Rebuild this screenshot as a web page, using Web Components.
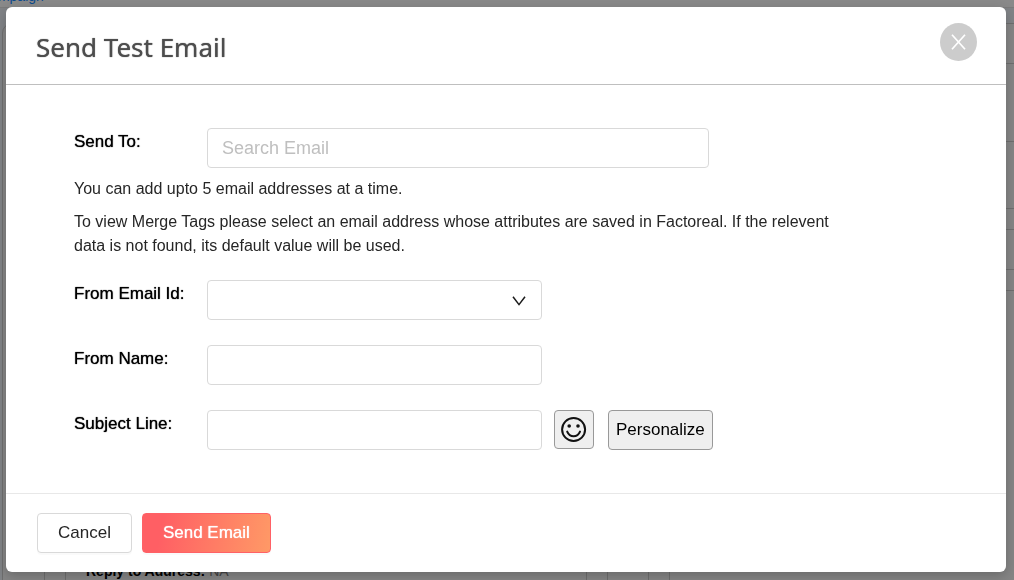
<!DOCTYPE html>
<html lang="en">
<head>
<meta charset="utf-8">
<meta name="viewport" content="width=device-width, initial-scale=1">
<title>Send Test Email</title>
<style>
    :root {
        --line: #d9d9d9;
        --text: #262626;
        --field-radius: 4px;
    }
    html, body {
        height: 100%;
    }
    body {
        margin: 0;
        overflow: hidden;
        font-family: "Liberation Sans", Arial, sans-serif;
        font-size: 17px;
        color: var(--text);
    }
</style>
</head>
<body>
<campaign-page></campaign-page>
<modal-dialog heading="Send Test Email">
    <form-row label="Send To:" type="text" placeholder="Search Email" wide></form-row>
    <form-hint>
        <p>You can add upto 5 email addresses at a time.</p>
        <p>To view Merge Tags please select an email address whose attributes are saved in Factoreal. If the relevent data is not found, its default value will be used.</p>
    </form-hint>
    <form-row label="From Email Id:" type="select"></form-row>
    <form-row label="From Name:" type="text"></form-row>
    <form-row label="Subject Line:" type="text">
        <emoji-button></emoji-button>
        <app-button variant="tool">Personalize</app-button>
    </form-row>
    <app-button slot="footer">Cancel</app-button>
    <app-button slot="footer" variant="primary">Send Email</app-button>
</modal-dialog>

<script>
/**
 * Campaign page that stays behind the dialog
 */
class CampaignPage extends HTMLElement {
    constructor() {
        super();
        this.attachShadow({ mode: "open" });
    }

    connectedCallback() {
        this.shadowRoot.innerHTML = `
        <style>
            :host {
                --edge: #6e6e6e;
                display: flex;
                flex-direction: column;
                height: 100vh;
                overflow: hidden;
                background: #808386;
                font-size: 14px;
                line-height: 20px;
            }
            * {
                box-sizing: border-box;
            }
            header {
                display: flex;
                align-items: flex-end;
                height: 8px;
                border-bottom: 1px solid #7b7b7b;
                background: #898989;
            }
            header a {
                margin: 0 0 1px -20px;
                color: #0d4a8c;
                text-decoration: none;
            }
            .panel {
                flex: 1;
                display: grid;
                grid-template-columns: 565fr 387fr;
                gap: 40px;
                margin: 15px -21px -20px 2px;
                padding-left: 41px;
                border: 1px solid var(--edge);
                border-radius: 10px 0 0 0;
                background: #858585;
            }
            .card {
                padding: 20px 20px 0;
                border: 1px solid var(--edge);
                border-width: 0 1px;
            }
            .inner {
                display: flex;
                align-items: flex-end;
                height: 100%;
                padding: 0 0 18px 20px;
                border: 1px solid var(--edge);
                border-width: 0 1px;
                color: #444;
            }
            .inner b {
                color: #000;
            }
            .side {
                display: flex;
                flex-direction: column;
            }
            .side div {
                border: 1px solid var(--edge);
                border-top: 0;
            }
            .side .head {
                height: 40px;
            }
            .side .stats {
                height: 78px;
            }
            .side .note {
                height: 67px;
            }
            .side .title {
                height: 41px;
                margin-top: 20px;
                border-top: 1px solid var(--edge);
            }
            .side .list {
                flex: 1;
                padding: 20px 0 0 20px;
            }
            .side .list div {
                height: 100%;
                border-top: 1px solid var(--edge);
            }
        </style>
        <header><a href="#">Campaign</a></header>
        <div class="panel">
            <div class="card">
                <div class="inner"><span><b>Reply to Address:</b> NA</span></div>
            </div>
            <div class="side">
                <div class="head"></div>
                <div class="stats"></div>
                <div class="note"></div>
                <div class="title"></div>
                <div class="list"><div></div></div>
            </div>
        </div>`;
    }
}

/**
 * Dialog with a heading, a body slot and a footer slot
 */
class ModalDialog extends HTMLElement {
    constructor() {
        super();
        this.attachShadow({ mode: "open" });
    }

    connectedCallback() {
        this.shadowRoot.innerHTML = `
        <style>
            :host {
                position: fixed;
                inset: 0;
                box-sizing: border-box;
                padding: 7px 8px 8px 6px;
                overflow: hidden;
            }
            section {
                display: flex;
                flex-direction: column;
                border-radius: 6px;
                background: #fff;
                box-shadow: 0 4px 12px rgba(0, 0, 0, 0.2);
            }
            header {
                display: flex;
                align-items: flex-start;
                justify-content: space-between;
                padding: 16px 29px 15px 30px;
                border-bottom: 1px solid #bfbfbf;
            }
            h2 {
                margin: 0;
                padding-top: 2px;
                font: 400 26px/44px "Noto Sans", "Segoe UI", sans-serif;
                color: #4d4d4d;
                text-shadow: 0 0 1px #4d4d4d;
            }
            .close {
                display: grid;
                place-items: center;
                width: 37px;
                height: 38px;
                padding: 0;
                border: 0;
                border-radius: 50%;
                background: #ccc;
                cursor: pointer;
            }
            .body {
                display: flex;
                flex-direction: column;
                gap: 25px;
                padding: 43px 68px;
            }
            footer {
                display: flex;
                gap: 10px;
                padding: 19px 31px;
                border-top: 1px solid #e8e8e8;
            }
        </style>
        <section role="dialog" aria-labelledby="heading">
            <header>
                <h2 id="heading">${this.getAttribute("heading")}</h2>
                <button class="close" type="button" aria-label="Close">
                    <svg width="15" height="16" viewBox="0 0 15 16" fill="none" stroke="#fff" stroke-width="1.7">
                        <path d="M1 0.8 14 15.2M14 0.8 1 15.2"/>
                    </svg>
                </button>
            </header>
            <div class="body"><slot></slot></div>
            <footer><slot name="footer"></slot></footer>
        </section>`;

        this.shadowRoot.querySelector(".close").addEventListener("click", () => this.remove());
    }
}

/**
 * Label with a text box or a drop-down; the slot takes extra buttons
 */
class FormRow extends HTMLElement {
    constructor() {
        super();
        this.attachShadow({ mode: "open" });
    }

    connectedCallback() {
        const placeholder = this.getAttribute("placeholder") || "";
        const control = this.getAttribute("type") === "select"
            ? `<select id="control"></select>
               <svg class="arrow" width="14" height="10" viewBox="0 0 14 10" fill="none" stroke="#1a1a1a" stroke-width="1.5">
                   <path d="M1 0.7 7 8.6 13 0.7"/>
               </svg>`
            : `<input id="control" type="text" placeholder="${placeholder}">`;

        this.shadowRoot.innerHTML = `
        <style>
            :host {
                display: grid;
                grid-template-columns: 133px 1fr;
                align-items: start;
            }
            label {
                line-height: 27px;
                color: #000;
                text-shadow: 0 0 1px #000;
            }
            .controls {
                display: flex;
                align-items: flex-start;
                gap: 12px;
            }
            .extra {
                display: flex;
                align-items: flex-start;
                gap: 14px;
            }
            .field {
                position: relative;
                flex: 0 1 335px;
            }
            :host([wide]) .field {
                flex-basis: 502px;
            }
            input, select {
                display: block;
                box-sizing: border-box;
                width: 100%;
                height: 40px;
                padding: 0 14px;
                border: 1px solid var(--line);
                border-radius: var(--field-radius);
                background: #fff;
                font: inherit;
                font-size: 18px;
                color: inherit;
                appearance: none;
            }
            input::placeholder {
                color: #bfbfbf;
            }
            .arrow {
                position: absolute;
                top: 16px;
                right: 16px;
                pointer-events: none;
            }
        </style>
        <label for="control">${this.getAttribute("label")}</label>
        <div class="controls">
            <div class="field">${control}</div>
            <div class="extra"><slot></slot></div>
        </div>`;
    }
}

/**
 * Help text between two rows
 */
class FormHint extends HTMLElement {
    constructor() {
        super();
        this.attachShadow({ mode: "open" });
        this.shadowRoot.innerHTML = `
        <style>
            :host {
                display: flex;
                flex-direction: column;
                gap: 9px;
                max-width: 790px;
                margin: -16px 0 -3px;
                font-size: 16px;
                line-height: 24px;
            }
            ::slotted(p) {
                margin: 0;
            }
        </style>
        <slot></slot>`;
    }
}

/**
 * Button; variant is "primary", "tool" or empty
 */
class AppButton extends HTMLElement {
    constructor() {
        super();
        this.attachShadow({ mode: "open" });
        this.shadowRoot.innerHTML = `
        <style>
            :host {
                display: block;
            }
            button {
                display: block;
                height: 40px;
                padding: 0 20px;
                border: 1px solid var(--line);
                border-radius: var(--field-radius);
                background: #fff;
                box-shadow: 0 2px 0 rgba(0, 0, 0, 0.02);
                font: inherit;
                color: inherit;
                white-space: nowrap;
                cursor: pointer;
            }
            :host([variant="primary"]) button {
                border-color: #ff6166;
                background: linear-gradient(100deg, #ff5f64 15%, #ff9966);
                color: #fff;
                text-shadow: 0 0 1px #fff;
            }
            :host([variant="tool"]) button {
                padding: 0 7px;
                border-color: #999;
                background: #efefef;
                box-shadow: none;
                color: #000;
            }
        </style>
        <button type="button"><slot></slot></button>`;
    }
}

class EmojiButton extends HTMLElement {
    constructor() {
        super();
        this.attachShadow({ mode: "open" });
        this.shadowRoot.innerHTML = `
        <style>
            :host {
                display: block;
            }
            button {
                display: grid;
                place-items: center;
                width: 40px;
                height: 39px;
                padding: 0;
                border: 1px solid #999;
                border-radius: var(--field-radius);
                background: #efefef;
                cursor: pointer;
            }
        </style>
        <button type="button" aria-label="Insert emoji">
            <svg width="26" height="25" viewBox="0 0 26 25" fill="none" stroke="#111" stroke-width="2">
                <circle cx="12.6" cy="12.5" r="11.5"/>
                <path d="M6.2 14.6C7.6 17.9 9.9 19.2 12.6 19.2S17.6 17.9 19 14.6" stroke-linecap="round"/>
                <circle cx="8.2" cy="9" r="1.8" fill="#111" stroke="none"/>
                <circle cx="17" cy="9" r="1.8" fill="#111" stroke="none"/>
            </svg>
        </button>`;
    }
}

customElements.define("campaign-page", CampaignPage);
customElements.define("modal-dialog", ModalDialog);
customElements.define("form-row", FormRow);
customElements.define("form-hint", FormHint);
customElements.define("app-button", AppButton);
customElements.define("emoji-button", EmojiButton);
</script>
</body>
</html>
